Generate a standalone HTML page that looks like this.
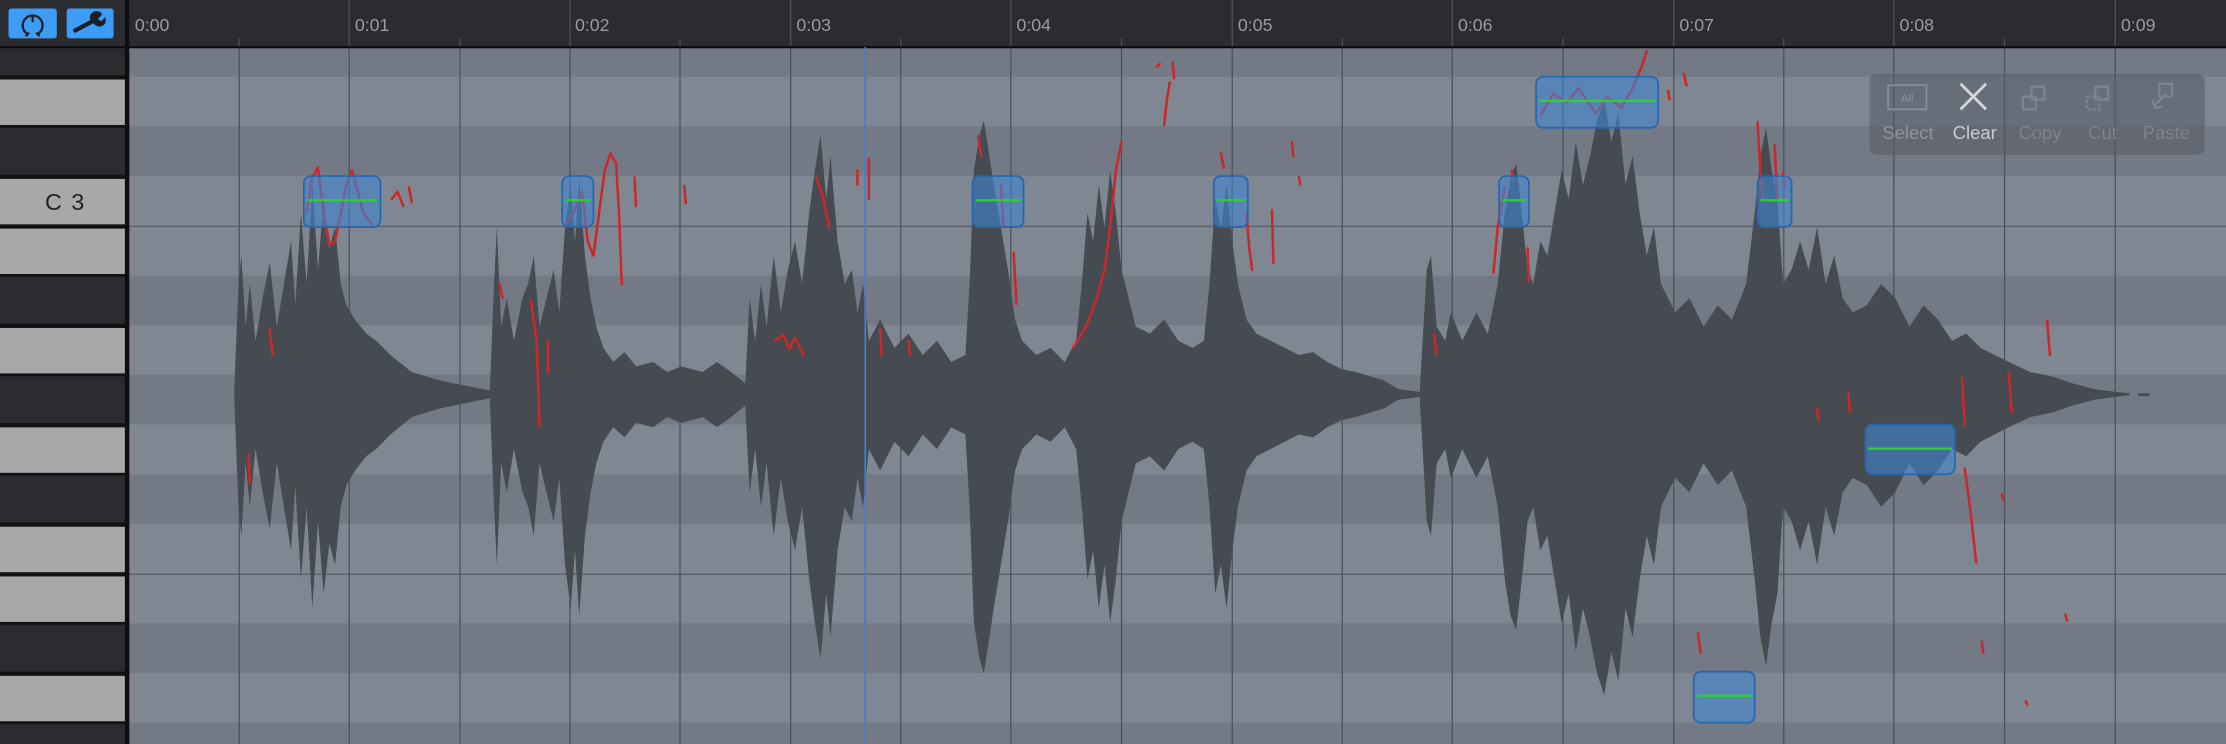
<!DOCTYPE html>
<html><head><meta charset="utf-8"><style>
html,body{margin:0;padding:0;background:#2b2c2f;overflow:hidden}
svg{display:block}
text{font-family:"Liberation Sans",sans-serif}
</style></head><body>
<svg width="2226" height="744" viewBox="0 0 1568 524" preserveAspectRatio="none" xmlns="http://www.w3.org/2000/svg">
<rect x="0" y="0" width="1568" height="524" fill="#2b2c2f"/>
<!-- grid rows -->
<g>
<rect x="91" y="33" width="1477" height="491" fill="#7f8792"/>
<rect x="91" y="33" width="1477" height="21" fill="#737a85"/>
<rect x="91" y="89" width="1477" height="35" fill="#737a85"/>
<rect x="91" y="194" width="1477" height="35" fill="#737a85"/>
<rect x="91" y="264" width="1477" height="35" fill="#737a85"/>
<rect x="91" y="334" width="1477" height="35" fill="#737a85"/>
<rect x="91" y="439" width="1477" height="35" fill="#737a85"/>
<rect x="91" y="509" width="1477" height="15" fill="#737a85"/>
<line x1="91" y1="159.5" x2="1568" y2="159.5" stroke="#5a606a" stroke-width="1"/>
<line x1="91" y1="404.5" x2="1568" y2="404.5" stroke="#5a606a" stroke-width="1"/>
</g>
<!-- vertical grid lines -->
<g stroke="#4c525b" stroke-width="0.9">
<line x1="168.5" y1="33" x2="168.5" y2="524"/><line x1="246" y1="0" x2="246" y2="524"/>
<line x1="324" y1="33" x2="324" y2="524"/><line x1="401.5" y1="0" x2="401.5" y2="524"/>
<line x1="479" y1="33" x2="479" y2="524"/><line x1="557" y1="0" x2="557" y2="524"/>
<line x1="634.5" y1="33" x2="634.5" y2="524"/><line x1="712" y1="0" x2="712" y2="524"/>
<line x1="790" y1="33" x2="790" y2="524"/><line x1="868" y1="0" x2="868" y2="524"/>
<line x1="945.5" y1="33" x2="945.5" y2="524"/><line x1="1023" y1="0" x2="1023" y2="524"/>
<line x1="1101" y1="33" x2="1101" y2="524"/><line x1="1179" y1="0" x2="1179" y2="524"/>
<line x1="1256.5" y1="33" x2="1256.5" y2="524"/><line x1="1334" y1="0" x2="1334" y2="524"/>
<line x1="1412" y1="33" x2="1412" y2="524"/><line x1="1490" y1="0" x2="1490" y2="524"/>
</g>
<!-- header ticks -->
<g stroke="#4c525b" stroke-width="0.9">
<line x1="168.5" y1="27" x2="168.5" y2="33"/><line x1="324" y1="27" x2="324" y2="33"/>
<line x1="479" y1="27" x2="479" y2="33"/><line x1="634.5" y1="27" x2="634.5" y2="33"/>
<line x1="790" y1="27" x2="790" y2="33"/><line x1="945.5" y1="27" x2="945.5" y2="33"/>
<line x1="1101" y1="27" x2="1101" y2="33"/><line x1="1256.5" y1="27" x2="1256.5" y2="33"/>
<line x1="1412" y1="27" x2="1412" y2="33"/>
</g>
<g fill="#9a9b9e" font-size="12.5">
<text x="95" y="22">0:00</text><text x="250" y="22">0:01</text><text x="405" y="22">0:02</text>
<text x="561" y="22">0:03</text><text x="716" y="22">0:04</text><text x="872" y="22">0:05</text>
<text x="1027" y="22">0:06</text><text x="1183" y="22">0:07</text><text x="1338" y="22">0:08</text>
<text x="1494" y="22">0:09</text>
</g>
<rect x="0" y="32.5" width="1568" height="1.5" fill="#0c0c0d"/>
<!-- waveform -->
<defs>
<path id="wf" d="M165,278 L165,275 168,200 170,180 173,230 176,200 180,240 185,210 190,185 195,230 200,200 205,170 208,215 212,150 216,200 220,130 224,190 228,140 232,175 236,160 240,200 244,215 250,225 258,235 265,240 275,250 290,262 310,268 330,272 345,275 348,200 350,160 353,230 357,210 362,240 368,210 372,200 376,180 380,230 385,210 390,190 394,220 398,160 402,130 405,170 408,125 412,180 416,210 420,230 425,245 432,255 440,248 448,258 460,255 470,262 480,258 495,262 505,255 515,262 525,270 528,210 532,240 536,200 540,230 545,180 550,220 555,190 560,170 565,200 570,150 574,120 578,95 582,140 585,110 590,170 595,200 600,190 604,220 608,200 612,240 620,225 630,245 640,235 650,250 660,240 670,255 680,250 683,200 686,120 690,95 693,85 697,110 700,130 705,160 710,190 715,225 720,240 730,250 740,245 750,255 758,240 762,200 766,150 770,170 774,130 778,160 782,120 786,150 790,190 795,210 800,230 810,235 820,225 830,240 840,245 848,240 852,200 856,140 860,160 864,130 868,170 872,200 878,225 885,235 895,240 905,245 915,250 925,248 935,255 945,260 955,262 965,265 975,268 985,274 1000,276 1005,190 1008,180 1012,230 1018,240 1022,220 1030,240 1040,220 1048,235 1055,200 1060,150 1064,125 1068,115 1072,150 1076,190 1080,200 1085,170 1090,180 1095,150 1100,120 1105,140 1110,100 1115,130 1120,110 1125,85 1130,70 1135,100 1140,80 1145,130 1150,110 1155,150 1160,180 1165,160 1170,200 1175,210 1180,220 1190,210 1200,230 1210,215 1220,225 1230,200 1236,150 1240,110 1244,90 1248,120 1252,140 1256,200 1262,190 1268,170 1274,190 1280,160 1286,200 1292,180 1298,210 1305,220 1315,215 1325,200 1335,210 1345,230 1355,215 1365,225 1375,240 1385,235 1395,245 1405,250 1415,255 1430,262 1445,265 1460,270 1475,274 1490,276 1500,277 1500,278 Z"/>
</defs>
<g fill="#464b52">
<use href="#wf"/>
<use href="#wf" transform="translate(0,561) scale(1,-1.02)"/>
<rect x="1506" y="277" width="8" height="2"/>
</g>
<!-- playhead -->
<line x1="609.5" y1="33" x2="609.5" y2="524" stroke="#3b7de0" stroke-width="1.2"/>
<!-- pitch curves -->
<g fill="none" stroke="#c9292b" stroke-width="1.8" stroke-linecap="round" stroke-linejoin="round">
<path d="M216,150 L220,125 224,118 228,150 232,172 236,170 240,150 244,130 248,120 252,135 256,150 262,158"/>
<path d="M276,140 L280,135 284,145 M288,132 L290,142"/>
<path d="M175,320 L176,340 M190,232 L192,250"/>
<path d="M374,212 L378,240 380,300 M386,240 L386,262 M352,200 L354,210"/>
<path d="M398,158 L404,150 410,135 414,170 418,180 422,150 426,120 430,108 434,115 436,150 438,200"/>
<path d="M447,125 L448,145 M482,131 L483,143"/>
<path d="M546,240 L552,236 556,246 560,238 566,250"/>
<path d="M575,125 L580,140 584,160 M604,120 L604,130 M612,112 L612,140 M620,232 L621,250 M640,240 L641,250"/>
<path d="M689,96 L691,110 M705,130 L707,160 M714,178 L716,214"/>
<path d="M756,245 L765,230 772,212 778,190 782,160 786,120 790,100"/>
<path d="M815,47 L817,45 M820,88 L822,70 824,58 M826,44 L827,55"/>
<path d="M860,108 L862,118 M878,150 L880,175 882,190 M896,148 L897,185 M910,100 L911,110 M915,125 L916,130"/>
<path d="M1010,236 L1012,250 M1052,192 L1055,160 1060,132 M1065,120 L1066,128 M1076,175 L1077,198"/>
<path d="M1086,80 L1094,66 1104,72 1112,62 1124,80 1132,68 1142,76 1150,62 1156,48 1160,36"/>
<path d="M1175,64 L1176,70 M1186,52 L1188,60"/>
<path d="M1238,86 L1240,120 1242,140 M1250,102 L1252,140 M1256,122 L1257,132"/>
<path d="M1280,288 L1281,296 M1302,276 L1303,290"/>
<path d="M1382,266 L1384,300 M1384,330 L1388,360 1392,396 M1410,348 L1411,352 M1415,262 L1417,290 M1442,226 L1444,250 M1455,433 L1456,437 M1396,452 L1397,460 M1427,494 L1428,496 M1196,446 L1198,460"/>
</g>
<!-- note boxes -->
<g fill="rgba(64,132,205,0.62)" stroke="#2566b0" stroke-width="1.2">
<rect x="214" y="124" width="54" height="36" rx="5"/>
<rect x="396" y="124" width="22" height="36" rx="5"/>
<rect x="685" y="124" width="36" height="36" rx="5"/>
<rect x="855" y="124" width="24" height="36" rx="5"/>
<rect x="1056" y="124" width="21" height="36" rx="5"/>
<rect x="1082" y="54" width="86" height="36" rx="5"/>
<rect x="1238" y="124" width="24" height="36" rx="5"/>
<rect x="1314" y="299" width="63" height="35" rx="5"/>
<rect x="1193" y="473" width="43" height="36" rx="5"/>
</g>
<g stroke="#2ed12e" stroke-width="1.6">
<line x1="216" y1="141" x2="266" y2="141"/><line x1="398" y1="141" x2="416" y2="141"/>
<line x1="687" y1="141" x2="719" y2="141"/><line x1="857" y1="141" x2="877" y2="141"/>
<line x1="1058" y1="141" x2="1075" y2="141"/><line x1="1084" y1="71" x2="1166" y2="71"/>
<line x1="1240" y1="141" x2="1260" y2="141"/><line x1="1316" y1="316" x2="1375" y2="316"/>
<line x1="1195" y1="490" x2="1234" y2="490"/>
</g>
<!-- toolbar -->
<rect x="1317" y="52" width="236" height="57" rx="5" fill="rgba(85,90,100,0.55)"/>
<rect x="1330" y="60" width="27" height="17" fill="none" stroke="#8a9099" stroke-width="1.2"/>
<text x="1343.5" y="72" font-size="8" fill="#8a9099" text-anchor="middle">All</text>
<path d="M1381,59 L1399,77 M1399,59 L1381,77" stroke="#d4d6d9" stroke-width="2" fill="none"/>
<g fill="none" stroke="#7e848d" stroke-width="1.6">
<rect x="1431" y="61" width="9" height="9"/><rect x="1425" y="68" width="9" height="9"/>
<rect x="1476" y="61" width="9" height="9"/><rect x="1470" y="68" width="9" height="9" stroke-dasharray="2 1.5"/>
<rect x="1521" y="59" width="9" height="9"/><path d="M1526,66 L1518,74 M1516,70 L1518,76 1523,75"/>
</g>
<g font-size="13" text-anchor="middle">
<text x="1344" y="98" fill="#8f949c">Select</text>
<text x="1391" y="98" fill="#c8cbcf">Clear</text>
<text x="1437" y="98" fill="#7d838c">Copy</text>
<text x="1481" y="98" fill="#7d838c">Cut</text>
<text x="1526" y="98" fill="#7d838c">Paste</text>
</g>
<!-- keyboard -->
<rect x="0" y="34" width="91" height="490" fill="#121213"/>
<g fill="#2b2c2f">
<rect x="0" y="34" width="88" height="19"/>
<rect x="0" y="90" width="88" height="33"/>
<rect x="0" y="195" width="88" height="33"/>
<rect x="0" y="265" width="88" height="33"/>
<rect x="0" y="335" width="88" height="33"/>
<rect x="0" y="440" width="88" height="33"/>
<rect x="0" y="510" width="88" height="14"/>
</g>
<g fill="#a8a8a8">
<rect x="0" y="56" width="88" height="32"/>
<rect x="0" y="126" width="88" height="32"/>
<rect x="0" y="161" width="88" height="32"/>
<rect x="0" y="231" width="88" height="32"/>
<rect x="0" y="301" width="88" height="32"/>
<rect x="0" y="371" width="88" height="32"/>
<rect x="0" y="406" width="88" height="32"/>
<rect x="0" y="476" width="88" height="32"/>
</g>
<text x="46" y="148" font-size="16.5" fill="#222" text-anchor="middle" letter-spacing="1">C 3</text>
<rect x="88" y="0" width="3" height="524" fill="#0f0f10"/>
<!-- header buttons -->
<rect x="6" y="6" width="34" height="21" rx="2" fill="#3d9cf6"/>
<rect x="47" y="6" width="33" height="21" rx="2" fill="#3d9cf6"/>
<g fill="none" stroke="#1a1f2a" stroke-width="1.6" stroke-linecap="round">
<path d="M19.5,24 A7,7 0 1 1 26.5,24"/>
<line x1="23" y1="11" x2="23" y2="15"/>
<path d="M18.5,25 L20,23.5 M27.5,25 L26,23.5"/>
</g>
<path d="M53,21.5 L66,14.5" stroke="#1a1f2a" stroke-width="3" stroke-linecap="round"/>
<path d="M64,15 A4.5,4.5 0 0 1 72,10 L69,13.5 L71.5,15 L74,12 A4.5,4.5 0 0 1 67,17.5 Z" fill="#1a1f2a"/>
</svg>
</body></html>
